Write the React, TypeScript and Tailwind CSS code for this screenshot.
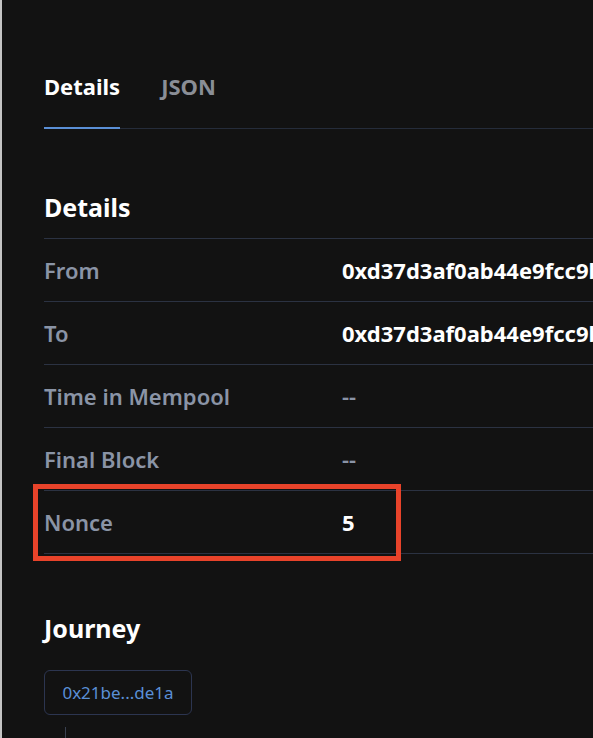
const rows = [
  { label: 'From', value: '0xd37d3af0ab44e9fcc9b8a2c6f1e0d4a73b92e5c1' },
  { label: 'To', value: '0xd37d3af0ab44e9fcc9b8a2c6f1e0d4a73b92e5c1' },
  { label: 'Time in Mempool', value: '--', muted: true },
  { label: 'Final Block', value: '--', muted: true },
  { label: 'Nonce', value: '5', highlight: true },
];

const App = () => {
  return (
    <div className="min-h-screen bg-[#121212] border-l-2 border-[#c4c4c4] pl-[42px] pt-[72px] overflow-hidden font-['Noto_Sans','Open_Sans',sans-serif]">
      {/* Tabs */}
      <div className="flex gap-[41px] border-b border-[#252c3a]">
        <div className="relative pb-[28px] text-[22px] leading-[28px] font-bold text-white">
          Details
          <span className="absolute left-0 right-0 -bottom-px h-[2px] bg-[#5a8fd6]"></span>
        </div>
        <div className="pb-[28px] text-[22px] leading-[28px] font-bold text-[#8a8e96]">JSON</div>
      </div>

      {/* Details */}
      <h2 className="mt-[63px] pb-[16px] text-[25px] leading-[30px] font-bold text-white border-b border-[#2b3242]">
        Details
      </h2>
      <div>
        {rows.map((row) => (
          <div
            key={row.label}
            className="relative flex items-center h-[63px] border-b border-[#2b3242] text-[22px] whitespace-nowrap"
          >
            <div className="w-[298px] shrink-0 font-semibold text-[#8a94a6]">{row.label}</div>
            <div className={row.muted ? 'font-semibold text-[#8a94a6]' : 'font-bold text-white'}>{row.value}</div>
            {row.highlight && (
              <span className="absolute left-[-11px] top-[-7px] w-[368px] h-[77px] border-[5px] border-[#e8432a]"></span>
            )}
          </div>
        ))}
      </div>

      {/* Journey */}
      <h2 className="mt-[59px] text-[25px] leading-[30px] font-bold text-white">Journey</h2>
      <div className="mt-[27px] inline-flex items-center justify-center w-[148px] h-[45px] rounded-[6px] border border-[#2c3550] text-[17px] text-[#5a8fd6]">
        0x21be...de1a
      </div>
      <div className="ml-[21px] mt-[12px] w-px h-[40px] bg-[#3a4150]"></div>
    </div>
  );
};

export default App;
